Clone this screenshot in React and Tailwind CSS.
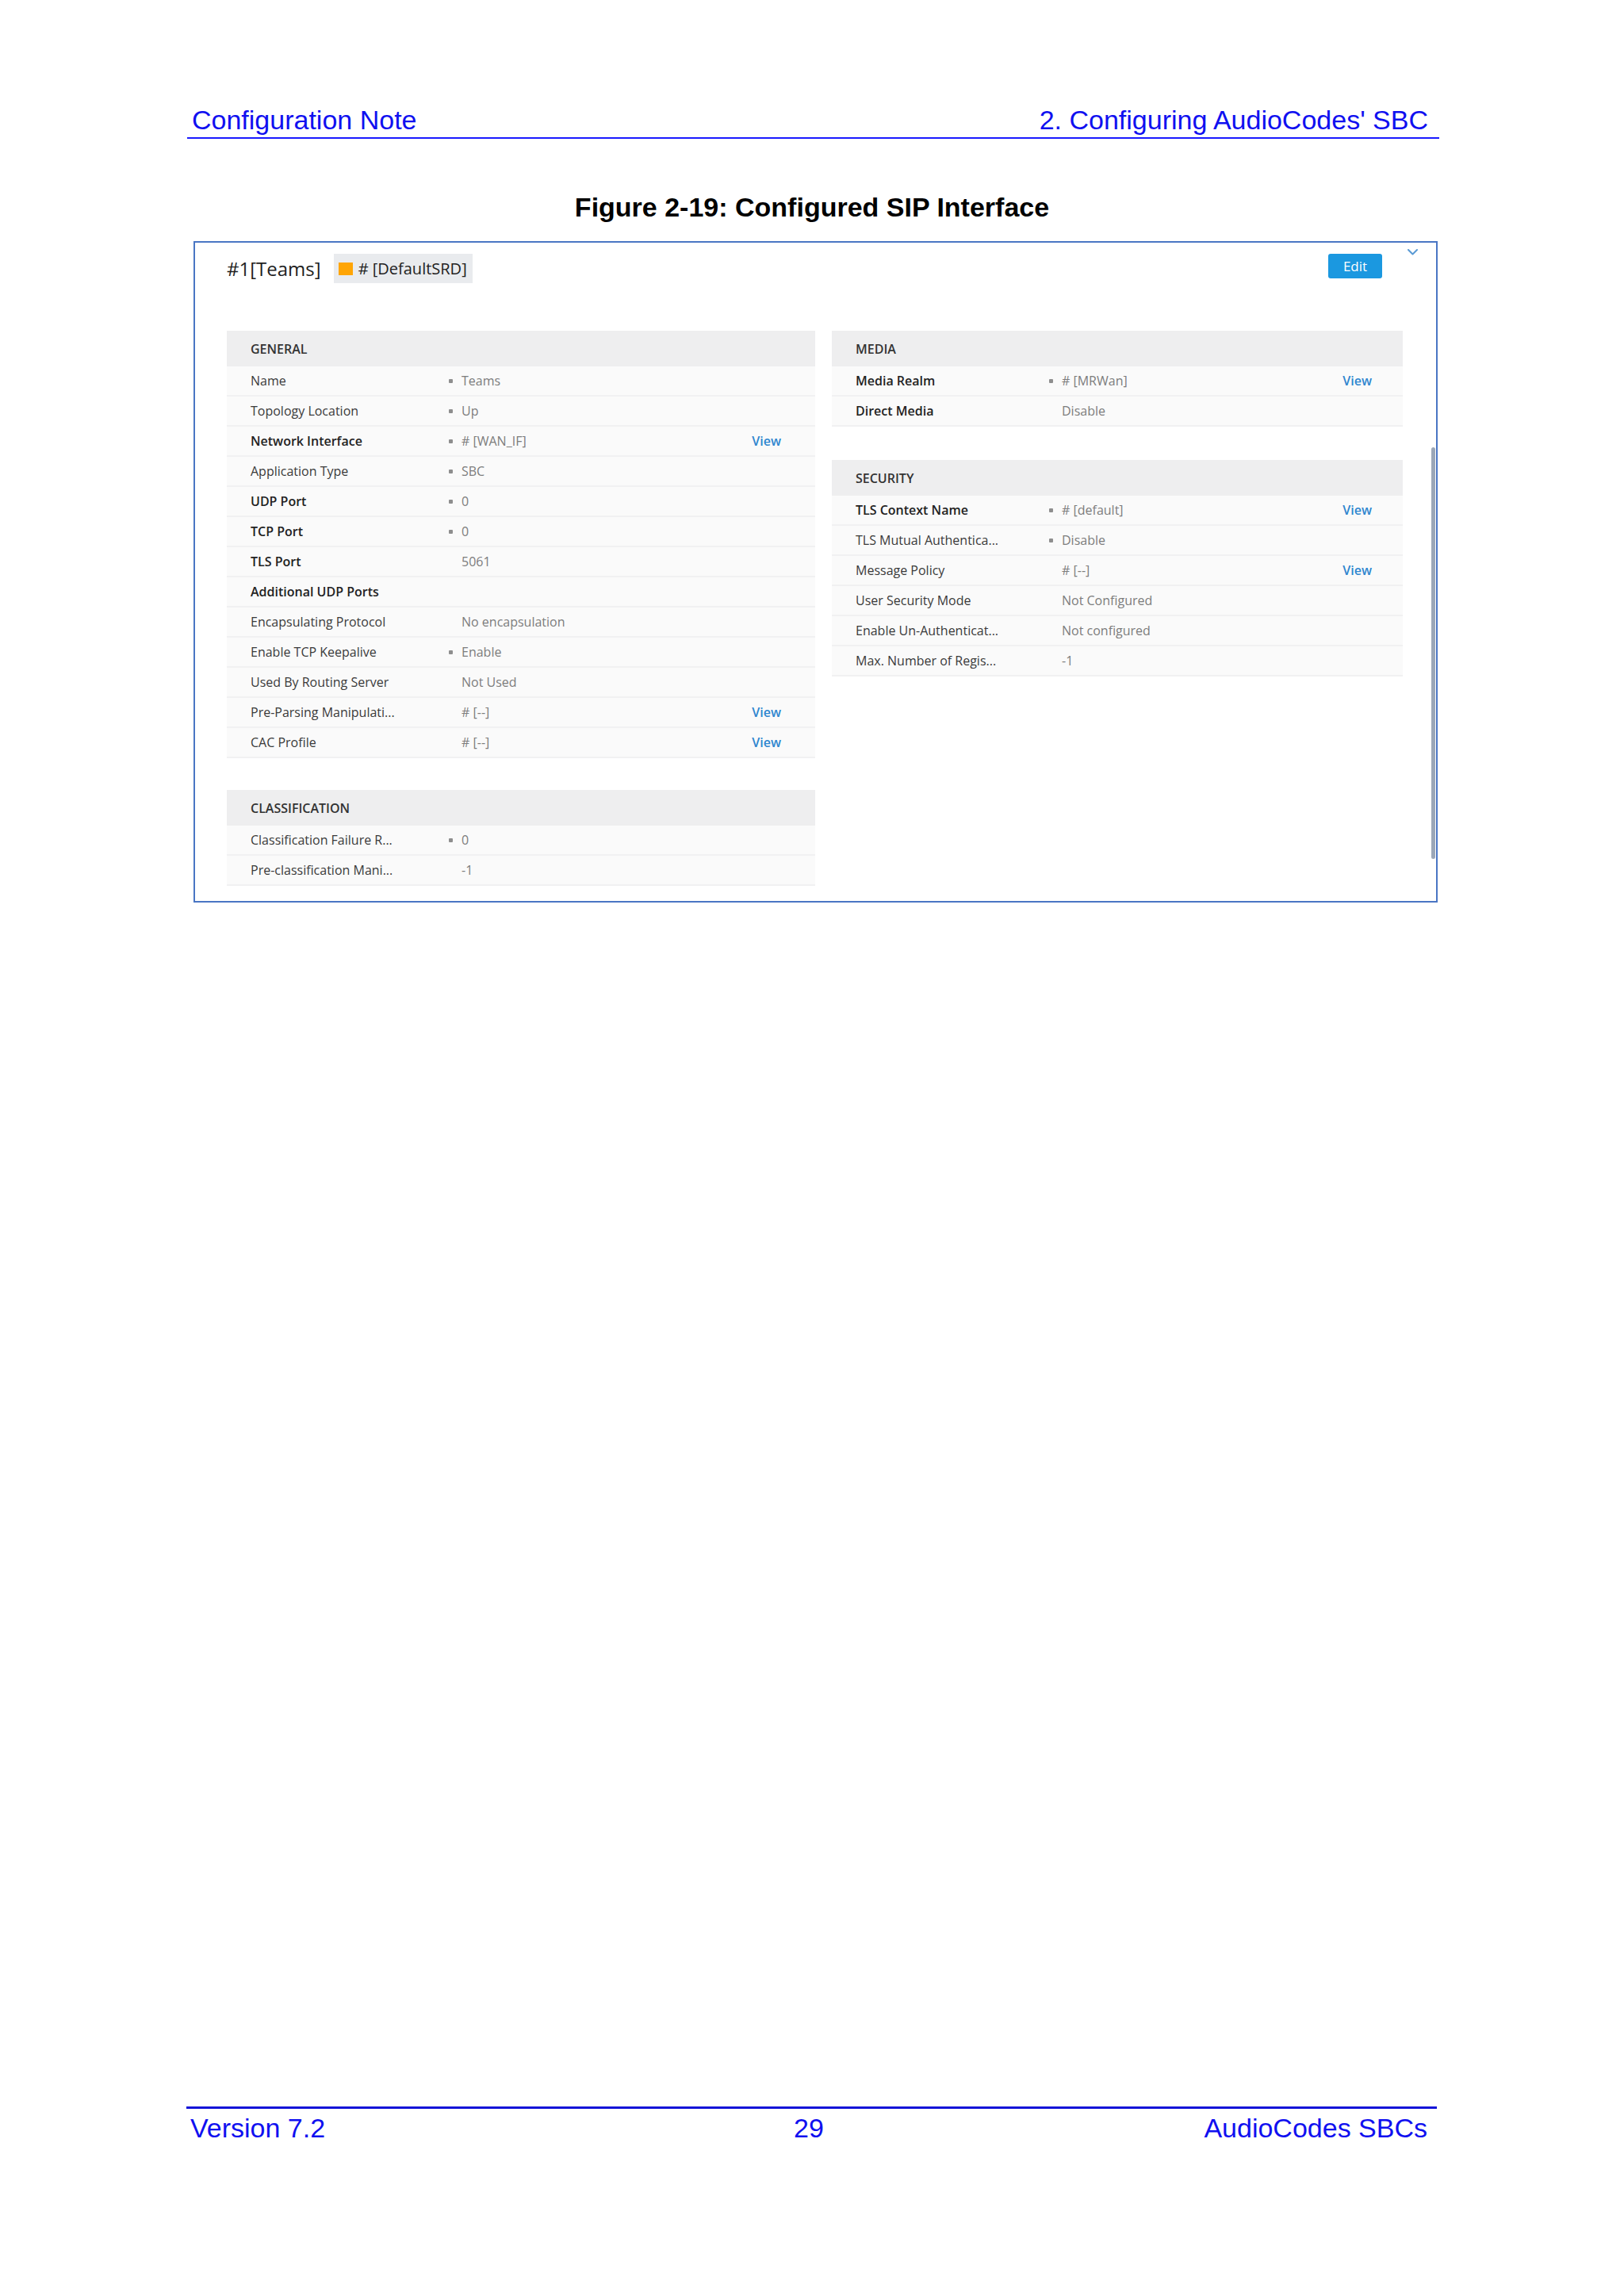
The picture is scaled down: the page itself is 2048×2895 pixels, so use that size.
import React from "react";

const general = [
  { label: "Name", value: "Teams", dot: true },
  { label: "Topology Location", value: "Up", dot: true },
  { label: "Network Interface", value: "# [WAN_IF]", dot: true, bold: true, view: true },
  { label: "Application Type", value: "SBC", dot: true },
  { label: "UDP Port", value: "0", dot: true, bold: true },
  { label: "TCP Port", value: "0", dot: true, bold: true },
  { label: "TLS Port", value: "5061", bold: true },
  { label: "Additional UDP Ports", value: "", bold: true },
  { label: "Encapsulating Protocol", value: "No encapsulation" },
  { label: "Enable TCP Keepalive", value: "Enable", dot: true },
  { label: "Used By Routing Server", value: "Not Used" },
  { label: "Pre-Parsing Manipulati...", value: "# [--]", view: true },
  { label: "CAC Profile", value: "# [--]", view: true },
];

const classification = [
  { label: "Classification Failure R...", value: "0", dot: true },
  { label: "Pre-classification Mani...", value: "-1" },
];

const media = [
  { label: "Media Realm", value: "# [MRWan]", dot: true, bold: true, view: true },
  { label: "Direct Media", value: "Disable", bold: true },
];

const security = [
  { label: "TLS Context Name", value: "# [default]", dot: true, bold: true, view: true },
  { label: "TLS Mutual Authentica...", value: "Disable", dot: true },
  { label: "Message Policy", value: "# [--]", view: true },
  { label: "User Security Mode", value: "Not Configured" },
  { label: "Enable Un-Authenticat...", value: "Not configured" },
  { label: "Max. Number of Regis...", value: "-1" },
];

const Row = ({ row, labelW, viewPr }) => (
  <div
    className={`flex items-center h-[38px] pl-[30px] ${viewPr} bg-[#fafafa] border-b-2 border-[#f1f1f2] text-[16px]`}
  >
    <span
      className={`${labelW} shrink-0 whitespace-nowrap ${
        row.bold ? "font-semibold text-[#222222]" : "text-[#3a3a3a]"
      }`}
    >
      {row.label}
    </span>
    <span className="w-[16px] shrink-0 flex items-center">
      {row.dot && <span className="w-[5px] h-[5px] rounded-[1px] bg-[#8e8e8e]" />}
    </span>
    <span className="flex-1 text-[#7d7d7d] whitespace-nowrap">{row.value}</span>
    {row.view && <span className="font-semibold text-[#2f86cf]">View</span>}
  </div>
);

const Section = ({ title, rows, labelW, viewPr }) => (
  <div>
    <div className="h-[45px] flex items-center pl-[30px] bg-[#eeeeef] text-[16px] font-semibold text-[#333333]">
      {title}
    </div>
    {rows.map((row) => (
      <Row key={row.label} row={row} labelW={labelW} viewPr={viewPr} />
    ))}
  </div>
);

const App = () => {
  return (
    <div className="w-[2048px] h-[2895px] flex flex-col bg-white font-['Liberation_Sans',Arial,sans-serif]">
      {/* page header */}
      <div className="mt-[134px] ml-[236px] w-[1579px] flex justify-between pl-[6px] pr-[14px] pb-[5px] border-b-2 border-[#1a1aff] text-[34px] leading-[34px] text-[#1010f0]">
        <span>Configuration Note</span>
        <span>2. Configuring AudioCodes' SBC</span>
      </div>

      <p className="mt-[69px] text-center text-[34px] leading-[34px] font-bold text-black">
        Figure 2-19: Configured SIP Interface
      </p>

      {/* screenshot frame */}
      <div className="relative mt-[26px] ml-[244px] w-[1569px] h-[834px] border-2 border-[#4a76c4] bg-white font-['Open_Sans',sans-serif]">
        <div className="pt-[14px] pl-[40px] pr-[37px]">
          <div className="flex items-start justify-between">
            <div className="flex items-center h-[37px]">
              <span className="text-[24px] text-[#1e1e1e] leading-none">#1[Teams]</span>
              <span className="ml-[16px] h-[37px] flex items-center gap-[7px] pl-[6px] pr-[7px] bg-[#e9ebee] text-[20px] text-[#222222]">
                <span className="w-[18px] h-[16px] bg-[#ffa505]" />
                # [DefaultSRD]
              </span>
            </div>
            <div className="flex items-start -mr-[14px]">
              <button className="w-[68px] h-[31px] rounded-[3px] bg-[#1b98e0] text-white text-[17px] leading-none">
                Edit
              </button>
              <svg
                className="ml-[32px] -mt-[6px]"
                width="13"
                height="8"
                viewBox="0 0 13 8"
                fill="none"
              >
                <polyline
                  points="1,1 6.5,6.5 12,1"
                  stroke="#5b9bd5"
                  strokeWidth="2"
                  strokeLinecap="round"
                  strokeLinejoin="round"
                />
              </svg>
            </div>
          </div>

          <div className="mt-[60px] grid grid-cols-[742px_720px] gap-x-[21px] items-start">
            <div className="flex flex-col gap-[40px]">
              <Section title="GENERAL" rows={general} labelW="w-[250px]" viewPr="pr-[43px]" />
              <Section
                title="CLASSIFICATION"
                rows={classification}
                labelW="w-[250px]"
                viewPr="pr-[43px]"
              />
            </div>
            <div className="flex flex-col gap-[42px]">
              <Section title="MEDIA" rows={media} labelW="w-[244px]" viewPr="pr-[39px]" />
              <Section title="SECURITY" rows={security} labelW="w-[244px]" viewPr="pr-[39px]" />
            </div>
          </div>
        </div>

        {/* scrollbar thumb */}
        <div className="absolute right-[1px] top-[258px] w-[5px] h-[519px] rounded-full bg-[#9ba7b8]" />
      </div>

      {/* page footer */}
      <div className="mt-auto mb-[195px] ml-[235px] w-[1577px] border-t-[3px] border-[#1414d8] pt-[7px] grid grid-cols-3 pl-[5px] pr-[12px] text-[34px] leading-[34px] text-[#1010f0]">
        <span>Version 7.2</span>
        <span className="text-center">29</span>
        <span className="text-right">AudioCodes SBCs</span>
      </div>
    </div>
  );
};

export default App;
